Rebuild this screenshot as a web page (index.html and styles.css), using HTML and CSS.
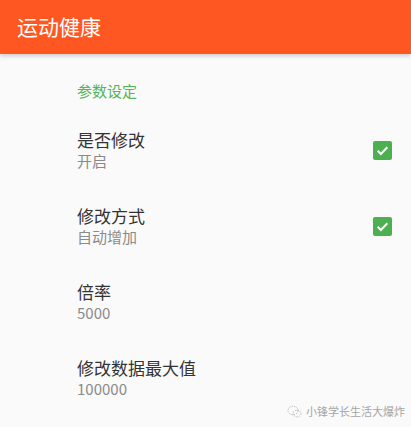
FILE: index.html
```html
<!DOCTYPE html>
<html lang="zh">
<head>
    <meta charset="UTF-8">
    <meta name="viewport" content="width=device-width, initial-scale=1.0">
    <title>运动健康</title>
    <link rel="stylesheet" href="styles.css">
</head>
<body>
    <div class="toolbar">运动健康</div>

    <div class="prefs">
        <div class="category">参数设定</div>

        <div class="pref">
            <div class="pref-text">
                <div class="pref-title">是否修改</div>
                <div class="pref-summary">开启</div>
            </div>
            <div class="checkbox">
                <svg width="15" height="15" viewBox="0 0 14 14"><path d="M2.5 7.2l3 3 6-6.2" fill="none" stroke="#fff" stroke-width="1.9"/></svg>
            </div>
        </div>

        <div class="pref">
            <div class="pref-text">
                <div class="pref-title">修改方式</div>
                <div class="pref-summary">自动增加</div>
            </div>
            <div class="checkbox">
                <svg width="15" height="15" viewBox="0 0 14 14"><path d="M2.5 7.2l3 3 6-6.2" fill="none" stroke="#fff" stroke-width="1.9"/></svg>
            </div>
        </div>

        <div class="pref">
            <div class="pref-text">
                <div class="pref-title">倍率</div>
                <div class="pref-summary">5000</div>
            </div>
        </div>

        <div class="pref">
            <div class="pref-text">
                <div class="pref-title">修改数据最大值</div>
                <div class="pref-summary">100000</div>
            </div>
        </div>
    </div>

    <div class="watermark">
        <svg width="15" height="13" viewBox="0 0 15 13"><ellipse cx="6" cy="5.5" rx="5" ry="4.3" fill="none" stroke="#b5b5b5" stroke-width="0.9" stroke-dasharray="1.5 1"/><ellipse cx="10" cy="8.5" rx="4" ry="3.4" fill="none" stroke="#b5b5b5" stroke-width="0.9" stroke-dasharray="1.5 1"/></svg>
        <span>小锋学长生活大爆炸</span>
    </div>
</body>
</html>
```

FILE: styles.css
```css
body {
    margin: 0;
    background-color: #fafafa;
    font-family: "Noto Sans CJK SC", "Noto Sans", sans-serif;
    height: 427px;
    overflow: hidden;
    position: relative;
}
.toolbar {
    height: 54px;
    background-color: #ff5722;
    color: #fff;
    font-size: 21px;
    line-height: 52px;
    padding-left: 17px;
    box-shadow: 0 2px 4px rgba(0, 0, 0, 0.18);
}
.prefs {
    padding-left: 77px;
}
.category {
    color: #55b358;
    font-size: 15px;
    line-height: 20px;
    padding-top: 27px;
    padding-bottom: 11px;
}
.pref {
    height: 76px;
    display: flex;
    align-items: center;
    padding-right: 19px;
}
.pref-text {
    flex: 1;
}
.pref-title {
    color: #333;
    font-size: 17px;
    line-height: 22px;
}
.pref-summary {
    color: #8a8a8a;
    font-size: 15px;
    line-height: 20px;
}
.checkbox {
    width: 19px;
    height: 19px;
    background-color: #4caf50;
    border-radius: 2px;
    display: flex;
    align-items: center;
    justify-content: center;
}
.watermark {
    position: absolute;
    right: 6px;
    bottom: 8px;
    display: flex;
    align-items: center;
    gap: 4px;
    color: #a5a5a5;
    font-size: 11px;
}
```
